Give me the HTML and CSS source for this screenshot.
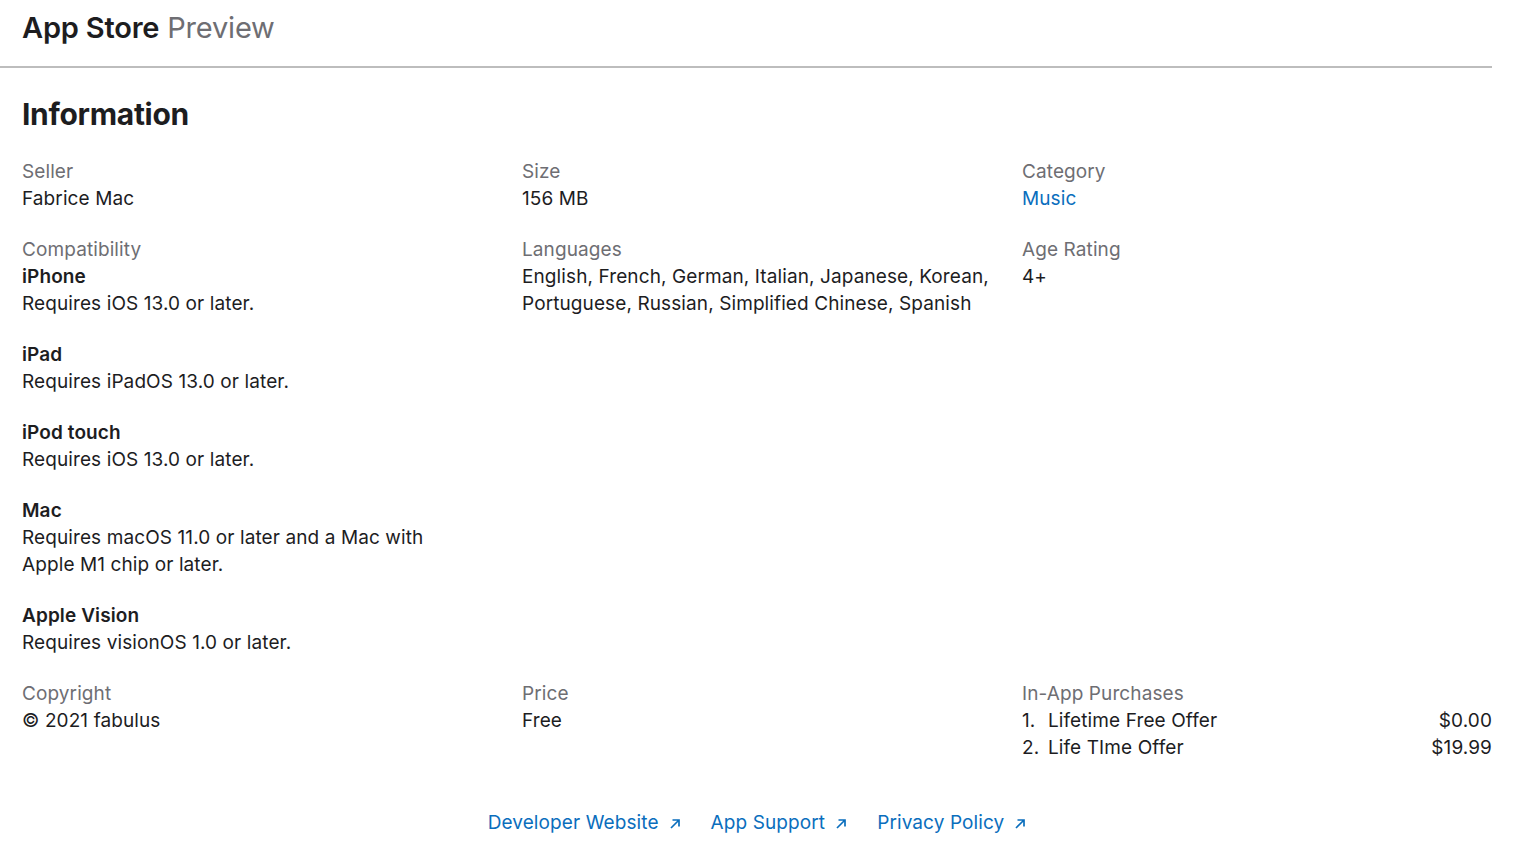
FILE: index.html
```html
<!DOCTYPE html>
<html lang="en">
<head>
    <meta charset="UTF-8">
    <meta name="viewport" content="width=device-width, initial-scale=1.0">
    <title>App Store Preview - Information</title>
    <link rel="stylesheet" href="styles.css">
</head>
<body>

    <header class="top-bar">
        <h1 class="brand"><span class="brand-strong">App Store</span> <span class="brand-light">Preview</span></h1>
    </header>

    <main class="container">
        <h2 class="section-title">Information</h2>

        <dl class="info-grid">
            <!-- column 1 -->
            <div class="info-col">
                <div class="info-item">
                    <dt>Seller</dt>
                    <dd>Fabrice Mac</dd>
                </div>
                <div class="info-item">
                    <dt>Compatibility</dt>
                    <dd>
                        <dl class="devices">
                            <div class="device">
                                <dt>iPhone</dt>
                                <dd>Requires iOS 13.0 or later.</dd>
                            </div>
                            <div class="device">
                                <dt>iPad</dt>
                                <dd>Requires iPadOS 13.0 or later.</dd>
                            </div>
                            <div class="device">
                                <dt>iPod touch</dt>
                                <dd>Requires iOS 13.0 or later.</dd>
                            </div>
                            <div class="device">
                                <dt>Mac</dt>
                                <dd>Requires macOS 11.0 or later and a Mac with Apple&nbsp;M1&nbsp;chip or later.</dd>
                            </div>
                            <div class="device">
                                <dt>Apple Vision</dt>
                                <dd>Requires visionOS 1.0 or later.</dd>
                            </div>
                        </dl>
                    </dd>
                </div>
            </div>

            <!-- column 2 -->
            <div class="info-col">
                <div class="info-item">
                    <dt>Size</dt>
                    <dd>156 MB</dd>
                </div>
                <div class="info-item">
                    <dt>Languages</dt>
                    <dd>English, French, German, Italian, Japanese, Korean, Portuguese, Russian, Simplified Chinese, Spanish</dd>
                </div>
            </div>

            <!-- column 3 -->
            <div class="info-col">
                <div class="info-item">
                    <dt>Category</dt>
                    <dd><a href="#" class="link">Music</a></dd>
                </div>
                <div class="info-item">
                    <dt>Age Rating</dt>
                    <dd>4+</dd>
                </div>
            </div>

            <!-- bottom row -->
            <div class="info-item">
                <dt>Copyright</dt>
                <dd>© 2021 fabulus</dd>
            </div>
            <div class="info-item">
                <dt>Price</dt>
                <dd>Free</dd>
            </div>
            <div class="info-item">
                <dt>In-App Purchases</dt>
                <dd>
                    <ol class="purchases">
                        <li><span class="num">1.</span><span class="name">Lifetime Free Offer</span><span class="price">$0.00</span></li>
                        <li><span class="num">2.</span><span class="name">Life TIme Offer</span><span class="price">$19.99</span></li>
                    </ol>
                </dd>
            </div>
        </dl>

        <nav class="footer-links">
            <a href="#" class="link">Developer Website <svg class="arrow" viewBox="0 0 12 12"><path d="M2 10 L10 2 M3.5 2 H10 V8.5"/></svg></a>
            <a href="#" class="link">App Support <svg class="arrow" viewBox="0 0 12 12"><path d="M2 10 L10 2 M3.5 2 H10 V8.5"/></svg></a>
            <a href="#" class="link">Privacy Policy <svg class="arrow" viewBox="0 0 12 12"><path d="M2 10 L10 2 M3.5 2 H10 V8.5"/></svg></a>
        </nav>
    </main>

</body>
</html>
```

FILE: styles.css
```css
body {
    font-family: Inter, "Noto Sans", Roboto, sans-serif;
    margin: 0;
    background-color: #ffffff;
    color: #1d1d1f;
    font-size: 19px;
    line-height: 27px;
    letter-spacing: 0.1px;
}
.top-bar {
    height: 68px;
    margin-right: 27px;
    border-bottom: 2px solid #bdbdbd;
    padding: 0 22px 10px;
    box-sizing: border-box;
    display: flex;
    align-items: center;
}
.brand {
    margin: 0;
    font-size: 29px;
    line-height: 36px;
    font-weight: 400;
    letter-spacing: -0.2px;
}
.brand-strong {
    font-weight: 600;
    color: #1d1d1f;
}
.brand-light {
    color: #6e6e73;
}
.container {
    padding: 0 27px 0 22px;
}
.section-title {
    margin: 28px 0 26px;
    font-size: 30px;
    line-height: 36px;
    font-weight: 700;
    letter-spacing: -0.3px;
}
.info-grid {
    margin: 0;
    display: grid;
    grid-template-columns: repeat(3, 1fr);
    column-gap: 30px;
    row-gap: 24px;
}
.info-col {
    display: flex;
    flex-direction: column;
    gap: 24px;
}
.info-item dt {
    color: #6e6e73;
}
.info-item dd {
    margin: 0;
}
.devices {
    margin: 0;
    display: flex;
    flex-direction: column;
    gap: 24px;
    max-width: 440px;
}
.devices dt {
    color: #1d1d1f;
    font-weight: 600;
}
.purchases {
    list-style: none;
    margin: 0;
    padding: 0;
}
.purchases li {
    display: flex;
}
.purchases .num {
    width: 26px;
}
.purchases .name {
    flex-grow: 1;
}
.link {
    color: #0a6ebd;
    text-decoration: none;
}
.footer-links {
    display: flex;
    justify-content: center;
    gap: 30px;
    margin-top: 48px;
}
.footer-links .link {
    display: inline-flex;
    align-items: center;
    gap: 10px;
}
.arrow {
    width: 12px;
    height: 12px;
    fill: none;
    stroke: #0a6ebd;
    stroke-width: 1.7;
    margin-top: 2px;
}
```
